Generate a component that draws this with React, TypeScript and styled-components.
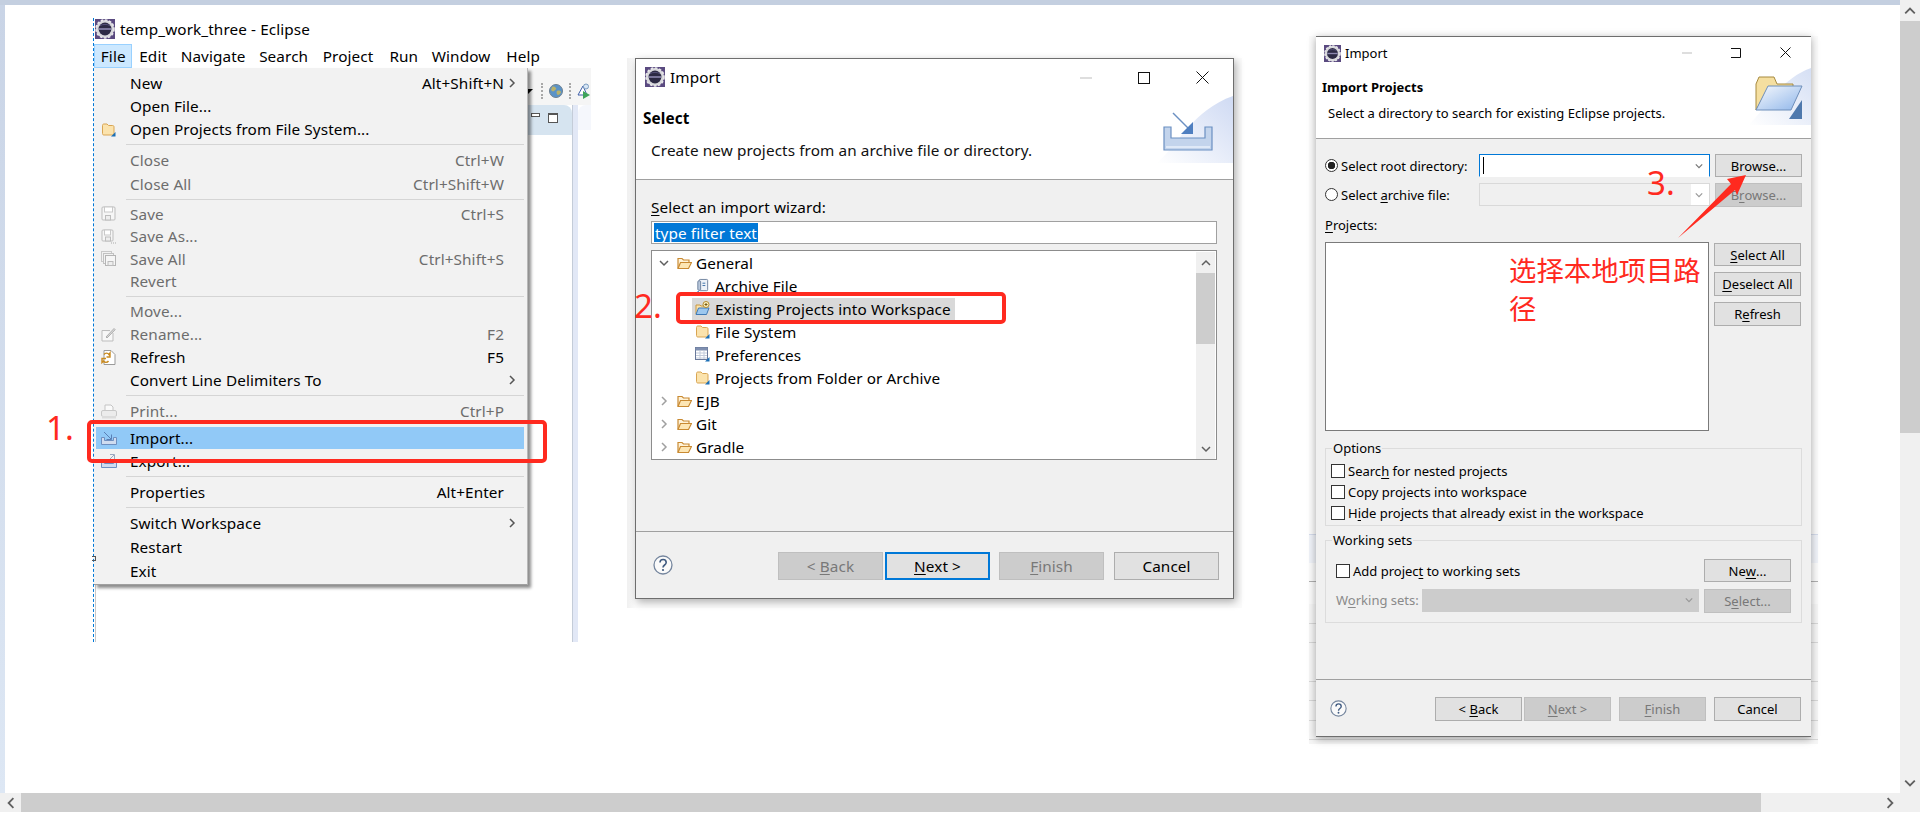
import React from "react";
import styled, { createGlobalStyle } from "styled-components";

const Global = createGlobalStyle`
  html, body { margin: 0; padding: 0; height: 100%; overflow: hidden; background: #fff; }
  #root { height: 100%; }
  * { box-sizing: border-box; }
`;

const FONT = `"Noto Sans", "Open Sans", "Noto Sans CJK SC", sans-serif`;
const RED = "#ff2a1f";

/* ---------- page frame ---------- */
const Page = styled.div`
  width: 1920px;
  height: 813px;
  display: grid;
  grid-template-columns: 1fr 20px;
  grid-template-rows: 793px 19px 1px;
  font-family: ${FONT};
  color: #000;
  overflow: hidden;
`;
const Stage = styled.div`
  display: grid;
  grid-template-rows: 5px 1fr;
  grid-template-columns: 5px 1fr;
  min-width: 0;
`;
const TopEdge = styled.div`
  grid-column: 1 / 3;
  background: #c4cfe0;
`;
const LeftEdge = styled.div`
  background: linear-gradient(#c9d4e6, #dde7f4);
`;
const Canvas = styled.div`
  position: relative;
  background: #fff;
`;
const VBar = styled.div`
  background: #f0f0f0;
  display: flex;
  flex-direction: column;
`;
const ScrollEnd = styled.div`
  flex: 1 1 auto;
`;
const ArrowCell = styled.div`
  flex: 0 0 21px;
  display: flex;
  align-items: center;
  justify-content: center;
`;
const VThumb = styled.div`
  flex: 0 0 412px;
  background: #cdcdcd;
`;
const HBar = styled.div`
  grid-column: 1 / 3;
  background: #f0f0f0;
  display: flex;
`;
const HThumb = styled.div`
  flex: 0 0 1740px;
  background: #cdcdcd;
`;
const BottomGap = styled.div`
  grid-column: 1 / 3;
  background: #fff;
`;

/* ---------- eclipse shot ---------- */
const EclipseShot = styled.div`
  position: absolute;
  left: 88px;
  top: 13px;
  width: 498px;
  height: 624px;
  border-left: 1px dashed #0078d7;
  display: flex;
  flex-direction: column;
  background: #fff;
`;
const Handle = styled.div`
  position: absolute;
  left: -2px;
  top: 538px;
  width: 4px;
  height: 5px;
  border: 1px solid #555;
  border-left: 0;
  z-index: 3;
`;
const TitleRow = styled.div`
  height: 26px;
  display: flex;
  align-items: center;
  gap: 5px;
  padding: 0 0 4px 1px;
  font-size: 15.3px;
  letter-spacing: 0.1px;
`;
const MenuBar = styled.div`
  height: 24px;
  display: flex;
  font-size: 15.3px;
  letter-spacing: 0.1px;
`;
const MenuItem = styled.div<{ $active?: boolean; $after: number }>`
  padding: 0 5.8px;
  margin-right: ${(p) => p.$after}px;
  display: flex;
  align-items: center;
  background: ${(p) => (p.$active ? "#cce8ff" : "transparent")};
  border: 1px solid ${(p) => (p.$active ? "#99d1ff" : "transparent")};
`;
const Workbench = styled.div`
  position: relative;
  flex: 1;
  display: flex;
  flex-direction: column;
  border-left: 1px solid #c8c8c8;
  margin-left: 1px;
`;
const ToolStrip = styled.div`
  height: 37px;
  background: #f5f5f5;
  display: flex;
  align-items: center;
  justify-content: flex-end;
  gap: 6px;
  padding: 9px 0 0 0;
`;
const Grip = styled.div`
  width: 1px;
  height: 16px;
  border-left: 2px dotted #a8a8a8;
`;
const Caret = styled.div`
  width: 0;
  height: 0;
  border-left: 5px solid transparent;
  border-right: 5px solid transparent;
  border-top: 5px solid #000;
  margin-right: 2px;
`;
const PanelRow = styled.div`
  flex: 1;
  display: flex;
`;
const LeftPanel = styled.div`
  flex: 0 0 477px;
  border-right: 1px solid #c4ccd8;
  background: #fff;
`;
const PanelHead = styled.div`
  height: 30px;
  background: #d6e4f0;
  border-top-right-radius: 8px;
  display: flex;
  justify-content: flex-end;
  align-items: flex-start;
  gap: 8px;
  padding: 8px 14px 0 0;
`;
const MinBtn = styled.div`
  width: 9px;
  height: 4px;
  border: 1px solid #555;
  background: #fff;
`;
const MaxBtn = styled.div`
  width: 10px;
  height: 10px;
  border: 1px solid #555;
  border-top-width: 2px;
  background: #fff;
`;
const Gutter = styled.div`
  flex: 0 0 5px;
  background: #e2e8f6;
`;
const RightPanel = styled.div`
  flex: 1;
  border-top-left-radius: 8px;
  background: linear-gradient(#f5f7fc 25px, #fff 25px);
`;

const Menu = styled.div`
  position: absolute;
  left: -2px;
  top: 0;
  width: 434px;
  height: 517px;
  background: #f2f2f2;
  padding-top: 3.5px;
  box-shadow: 3px 3px 3px rgba(0, 0, 0, 0.45);
  border-right: 1px solid #b8b8b8;
  border-bottom: 1px solid #a0a0a0;
  font-size: 15.3px;
  letter-spacing: 0.1px;
  z-index: 2;
`;
const MenuRow = styled.div<{ $h: number; $off?: boolean; $hot?: boolean }>`
  height: ${(p) => p.$h}px;
  display: grid;
  grid-template-columns: 34px 1fr auto 20px;
  align-items: center;
  color: ${(p) => (p.$off ? "#6d6d6d" : "#000")};
  background: ${(p) => (p.$hot ? "#91c9f7" : "transparent")};
  margin: 0 3px 0 2px;
`;
const MenuIcon = styled.div`
  display: flex;
  padding-left: 5px;
`;
const Shortcut = styled.div``;
const Sub = styled.div`
  display: flex;
  justify-content: flex-end;
  padding-right: 7px;
`;
const MenuSep = styled.div`
  height: 1px;
  background: #d5d5d5;
  margin: 3px 3px 3px 32px;
`;
const MenuGap = styled.div`
  height: 3px;
`;

/* ---------- dialogs ---------- */
const DialogShade = styled.div`
  position: absolute;
  left: 622px;
  top: 53px;
  width: 615px;
  height: 550px;
  background: linear-gradient(90deg, #f0f0f0 0, #fbfbfb 8px, #fbfbfb 100%);
`;
const Dialog = styled.div`
  position: absolute;
  left: 630px;
  top: 53px;
  width: 599px;
  height: 541px;
  display: flex;
  flex-direction: column;
  background: #f0f0f0;
  border: 1px solid #6e6e6e;
  box-shadow: 2px 3px 8px rgba(0, 0, 0, 0.3);
  font-size: 15.3px;
  letter-spacing: 0.1px;
`;
const DialogTop = styled.div`
  flex: 0 0 121px;
  position: relative;
  background: #fff;
  border-bottom: 1px solid #a0a0a0;
  padding: 8px 0 0 9px;
`;
const WinTitle = styled.div`
  display: flex;
  align-items: center;
  gap: 5px;
  height: 20px;
`;
const WinControls = styled.div`
  position: absolute;
  right: 24px;
  top: 12px;
  display: flex;
  align-items: center;
  gap: 46px;
`;
const Heading = styled.div`
  font-weight: 700;
  margin: 21px 0 0 -2px;
  line-height: 20px;
`;
const Desc = styled.div`
  margin: 12px 0 0 6px;
  line-height: 20px;
  color: #111;
`;
const Banner = styled.svg`
  position: absolute;
  right: 0;
  top: 37px;
`;
const DialogBody = styled.div`
  flex: 1;
  padding: 17px 16px 0 15px;
  display: flex;
  flex-direction: column;
`;
const Mn = styled.span`
  text-decoration: underline;
  text-underline-offset: 2px;
  text-decoration-thickness: 1px;
`;
const FieldLabel = styled.div`
  line-height: 20px;
  height: 24px;
`;
const FilterInput = styled.div`
  height: 23px;
  border: 1px solid #a0a0a0;
  background: #fff;
  padding: 1px 2px;
  display: flex;
`;
const Selected = styled.span`
  background: #0078d7;
  color: #fff;
  line-height: 20px;
  padding: 0 1px;
`;
const TreeBox = styled.div`
  margin-top: 6px;
  height: 210px;
  border: 1px solid #8c8c8c;
  background: #fff;
  display: flex;
  padding: 1px 1px 0 0;
`;
const TreeList = styled.div`
  flex: 1;
  margin-top: -1px;
  overflow: hidden;
`;
const TreeRow = styled.div<{ $depth?: number }>`
  height: 23px;
  display: flex;
  align-items: center;
  padding-left: ${(p) => (p.$depth ? 43 : 6)}px;
`;
const Twisty = styled.div`
  width: 12px;
  margin-right: 7px;
  display: flex;
  justify-content: center;
`;
const TreeIcon = styled.div<{ $tight?: boolean }>`
  width: 15px;
  height: 16px;
  margin-right: ${(p) => (p.$tight ? 4 : 5)}px;
  display: flex;
  align-items: center;
`;
const TreeLabel = styled.span<{ $hot?: boolean }>`
  background: ${(p) => (p.$hot ? "#d9d9d9" : "transparent")};
  line-height: 22px;
  padding-right: 4px;
`;
const HotBlock = styled.div`
  display: flex;
  align-items: center;
  background: #d9d9d9;
  margin-left: -3px;
  padding-left: 3px;
`;
const TreeScroll = styled.div`
  width: 19px;
  background: #f0f0f0;
  display: flex;
  flex-direction: column;
`;
const TreeThumb = styled.div`
  flex: 0 0 71px;
  background: #cdcdcd;
`;
const Footer = styled.div<{ $h: number; $pad: string }>`
  flex: 0 0 ${(p) => p.$h}px;
  border-top: 1px solid #a0a0a0;
  display: flex;
  align-items: flex-start;
  padding: ${(p) => p.$pad};
`;
const HelpWrap = styled.div<{ $top: number }>`
  margin-right: auto;
  margin-top: ${(p) => p.$top}px;
`;
const Btn = styled.div<{ $w: number; $h: number; $kind?: "off" | "focus" }>`
  width: ${(p) => p.$w}px;
  height: ${(p) => p.$h}px;
  display: flex;
  align-items: center;
  justify-content: center;
  flex: none;
  background: ${(p) => (p.$kind === "off" ? "#cccccc" : "#e1e1e1")};
  border: ${(p) =>
    p.$kind === "focus" ? "2px solid #0078d7" : p.$kind === "off" ? "1px solid #bfbfbf" : "1px solid #adadad"};
  color: ${(p) => (p.$kind === "off" ? "#787878" : "#000")};
`;
const BtnGap = styled.div<{ $w: number }>`
  flex: 0 0 ${(p) => p.$w}px;
`;

/* ---------- import projects dialog ---------- */
const SmallShade = styled.div`
  position: absolute;
  left: 1304px;
  top: 31px;
  width: 509px;
  height: 708px;
  background:
    linear-gradient(#d5dcec, #d5dcec) 0 498px / 100% 1px no-repeat,
    linear-gradient(#f0f3f9, #f0f3f9) 0 499px / 100% 28px no-repeat,
    linear-gradient(#b0b0b0, #b0b0b0) 0 545px / 100% 1px no-repeat,
    repeating-linear-gradient(#f6f6f6 0, #f6f6f6 18.5px, #d8d8d8 18.5px, #d8d8d8 19.5px) 0 568px / 100% 140px no-repeat,
    #fbfbfb;
`;
const Small = styled.div`
  position: absolute;
  left: 1311px;
  top: 31px;
  width: 495px;
  height: 701px;
  display: flex;
  flex-direction: column;
  background: #f0f0f0;
  border-top: 1px solid #6e6e6e;
  border-bottom: 1px solid #6e6e6e;
  box-shadow: 0 2px 8px rgba(0, 0, 0, 0.35);
  font-size: 13px;
`;
const SmallTop = styled.div`
  flex: 0 0 102px;
  position: relative;
  background: #fff;
  border-bottom: 1px solid #a0a0a0;
  padding: 7px 0 0 8px;
`;
const SmallTitle = styled.div`
  display: flex;
  align-items: center;
  gap: 4px;
  height: 18px;
`;
const SmallControls = styled.div`
  position: absolute;
  right: 20px;
  top: 10px;
  display: flex;
  align-items: center;
  gap: 39px;
`;
const SmallHeading = styled.div`
  font-weight: 700;
  margin: 16px 0 0 -2px;
  line-height: 18px;
`;
const SmallDesc = styled.div`
  margin: 8px 0 0 4px;
  line-height: 18px;
`;
const SmallBanner = styled.svg`
  position: absolute;
  right: 0;
  top: 31px;
`;
const Form = styled.div`
  flex: 1;
  padding: 15px 10px 0 9px;
  display: flex;
  flex-direction: column;
`;
const SourceGrid = styled.div`
  display: grid;
  grid-template-columns: 149px 231px 87px;
  column-gap: 5px;
  row-gap: 6px;
  grid-auto-rows: 23px;
  align-items: stretch;
`;
const RadioLine = styled.div`
  display: flex;
  align-items: center;
  gap: 3px;
  white-space: nowrap;
`;
const Radio = styled.div<{ $on?: boolean }>`
  width: 13px;
  height: 13px;
  flex: none;
  border-radius: 50%;
  border: 1px solid #333;
  background: ${(p) => (p.$on ? "radial-gradient(circle, #222 0 3.5px, #fff 4px)" : "#fff")};
`;
const Combo = styled.div<{ $off?: boolean; $focus?: boolean }>`
  display: flex;
  align-items: center;
  justify-content: space-between;
  background: #fff;
  padding: 0 6px 0 3px;
  border: 1px solid ${(p) => (p.$focus ? "#0078d7" : "#d9d9d9")};
  ${(p) => (p.$focus ? "border-bottom-color: transparent;" : "")}
  ${(p) => (p.$off ? "background: linear-gradient(90deg, #f0f0f0 0 92%, #fff 92%);" : "")}
`;
const Caretbar = styled.div`
  width: 1px;
  height: 17px;
  background: #000;
`;
const ProjectsLabel = styled.div`
  margin-top: 10px;
  height: 26px;
  line-height: 18px;
`;
const ProjectsRow = styled.div`
  display: grid;
  grid-template-columns: 384px 87px;
  column-gap: 5px;
  height: 189px;
`;
const ProjectsBox = styled.div`
  background: #fff;
  border: 1px solid #7a7a7a;
`;
const SideButtons = styled.div`
  display: flex;
  flex-direction: column;
  gap: 6px;
  padding-top: 1px;
`;
const Group = styled.div<{ $h: number; $top: number }>`
  position: relative;
  height: ${(p) => p.$h}px;
  margin-top: ${(p) => p.$top}px;
  width: 477px;
  border: 1px solid #dcdcdc;
`;
const Legend = styled.div`
  position: absolute;
  left: 6px;
  top: -10px;
  background: #f0f0f0;
  padding: 0 1px;
  line-height: 18px;
`;
const OptionList = styled.div`
  display: flex;
  flex-direction: column;
  padding: 11px 0 0 5px;
`;
const CheckLine = styled.div`
  height: 21px;
  display: flex;
  align-items: center;
  gap: 3px;
`;
const Check = styled.div`
  width: 14px;
  height: 14px;
  flex: none;
  background: #fff;
  border: 1px solid #333;
`;
const WorkingGrid = styled.div`
  display: grid;
  grid-template-columns: 81px 277px 87px;
  column-gap: 5px;
  row-gap: 6px;
  grid-auto-rows: 23.5px;
  padding: 18px 0 0 10px;
  align-items: stretch;
`;
const WideCheck = styled.div`
  grid-column: 1 / 3;
  display: flex;
  align-items: center;
  gap: 3px;
`;
const OffLabel = styled.div`
  display: flex;
  align-items: center;
  color: #8a8a8a;
  white-space: nowrap;
`;
const OffCombo = styled.div`
  background: #cccccc;
  display: flex;
  align-items: center;
  justify-content: flex-end;
  padding-right: 6px;
`;

/* ---------- annotations ---------- */
const Callout = styled.div`
  position: absolute;
  border: 4px solid ${RED};
  border-radius: 5px;
  z-index: 5;
`;
const ImportBox = styled(Callout)`
  left: 82px;
  top: 415px;
  width: 460px;
  height: 43px;
`;
const WizardBox = styled(Callout)`
  left: 671px;
  top: 287px;
  width: 330px;
  height: 32px;
`;
const Step = styled.div`
  position: absolute;
  color: ${RED};
  font-size: 33px;
  line-height: 36px;
  z-index: 5;
`;
const StepOne = styled(Step)`
  left: 41px;
  top: 405px;
`;
const StepTwo = styled(Step)`
  left: 629px;
  top: 283px;
`;
const StepThree = styled(Step)`
  left: 1642px;
  top: 160px;
`;
const Note = styled.div`
  position: absolute;
  left: 1504px;
  top: 246px;
  width: 200px;
  color: ${RED};
  font-family: "Noto Sans CJK SC", sans-serif;
  font-size: 27.4px;
  line-height: 37.5px;
  z-index: 5;
`;
const ArrowSvg = styled.svg`
  position: absolute;
  left: 1665px;
  top: 165px;
  z-index: 5;
`;

/* ---------- drawn icons ---------- */
const EclipseLogo = ({ s = 20 }: { s?: number }) => (
  <svg width={s} height={s} viewBox="0 0 20 20" style={{ flex: "none" }}>
    <rect width="20" height="20" fill="#5a4a80" />
    <circle cx="10" cy="10" r="9" fill="#d8d8dc" stroke="#e8e8ea" strokeWidth="1.6" strokeDasharray="2.6 1.6" />
    <circle cx="10" cy="10" r="6.4" fill="#2c2a44" />
    <path d="M3.8 10h12.4" stroke="#8c88b0" strokeWidth="1.6" />
    <path d="M5 6.6c3-1.6 7-1.6 10 0" fill="none" stroke="#55527a" strokeWidth="1" />
  </svg>
);
const Chevron = ({ dir, c = "#5f5f5f", s = 10 }: { dir: "r" | "d" | "u" | "l"; c?: string; s?: number }) => {
  const d = { r: "M3 1l4 4-4 4", l: "M7 1L3 5l4 4", d: "M1 3l4 4 4-4", u: "M1 7l4-4 4 4" }[dir];
  return (
    <svg width={s} height={s} viewBox="0 0 10 10">
      <path d={d} fill="none" stroke={c} strokeWidth="1.5" />
    </svg>
  );
};
const ClosedFolder = () => (
  <svg width="15" height="15" viewBox="0 0 15 15">
    <path d="M1.5 3.5c0-1 .5-1.500 1.500-1.500h3l1.500 1.500h4c1 0 1.500.5 1.500 1.500v7c0 .6-.4 1-1 1H3c-1 0-1.500-.5-1.500-1.500z" fill="#fbe3ad" stroke="#d9a552" />
    <path d="M14.500 10v4.500H10z" fill="#1b6fb5" />
  </svg>
);
const OpenFolder = () => (
  <svg width="15" height="14" viewBox="0 0 15 14">
    <path d="M1 12V2.500h4L6.500 4H12v2.500" fill="#fff3d8" stroke="#c98a32" strokeWidth="1.200" />
    <path d="M1 12.500l2.500-6H14.500l-3 6z" fill="#fde6b4" stroke="#c98a32" strokeWidth="1.200" />
  </svg>
);
const ProjectFolder = () => (
  <svg width="15" height="15" viewBox="0 0 15 15">
    <path d="M1 13V4h4l1 1h5v2" fill="#fbe3ad" stroke="#c9973f" />
    <path d="M1 13.500L3.500 7H14l-2.500 6.500z" fill="#9cc7ee" stroke="#3f79b5" />
    <circle cx="11" cy="3.500" r="3" fill="#fff6c8" stroke="#b58a2c" />
    <path d="M9.500 3.500h3M11 2v3" stroke="#7a5a10" />
  </svg>
);
const ArchiveIcon = () => (
  <svg width="16" height="16" viewBox="0 0 16 16">
    <rect x="4.500" y="1" width="9" height="12" rx="1" fill="#eef2f8" stroke="#6c7f9c" />
    <rect x="3" y="2.500" width="3" height="10" rx="1" fill="#b9c8dc" stroke="#6c7f9c" />
    <path d="M8 5h3M8 7.500h3" stroke="#3a6ea5" />
    <path d="M1 15l3-2v2z" fill="#1b6fb5" />
  </svg>
);
const PrefIcon = () => (
  <svg width="15" height="15" viewBox="0 0 15 15">
    <rect x=".5" y=".5" width="12" height="12" fill="#fff" stroke="#69789a" />
    <rect x=".5" y=".5" width="12" height="3" fill="#7f8fb0" />
    <path d="M1 6h11M1 8.500h11M1 11h11M5 4v8M9 4v8" stroke="#c2cbdb" />
    <path d="M14.500 10v4.500H10z" fill="#1b6fb5" />
  </svg>
);
const SaveIcon = ({ small }: { small?: boolean }) => (
  <svg width="15" height="15" viewBox="0 0 15 15">
    <rect x="1" y="1" width={small ? 11 : 13} height={small ? 11 : 13} rx="1" fill="#f6f6f6" stroke="#bdbdbd" />
    <rect x="3.500" y="1" width={small ? 6 : 8} height="5" fill="#fff" stroke="#c9c9c9" />
    <rect x="4.500" y={small ? 8 : 9.500} width="5" height={small ? 4 : 4.500} fill="#eee" stroke="#bdbdbd" />
    {small && <path d="M10 14h1M12 14h1M14 14h1" stroke="#aaa" />}
  </svg>
);
const SaveAllIcon = () => (
  <svg width="15" height="15" viewBox="0 0 15 15">
    <rect x=".5" y=".5" width="10" height="10" fill="#f2f2f2" stroke="#c9c9c9" />
    <rect x="2.500" y="2.500" width="10" height="10" fill="#f2f2f2" stroke="#c2c2c2" />
    <rect x="4.500" y="4.500" width="10" height="10" fill="#f6f6f6" stroke="#b5b5b5" />
    <rect x="7" y="10.500" width="5" height="4" fill="#eee" stroke="#bbb" />
  </svg>
);
const RenameIcon = () => (
  <svg width="15" height="15" viewBox="0 0 15 15">
    <path d="M1 3.500h8M1 3.500V14h11V6" fill="#f8f8f8" stroke="#bdbdbd" />
    <path d="M5 10l8-8.500 1.200 1.200L6 11z" fill="#d8d8d8" stroke="#b0b0b0" />
  </svg>
);
const RefreshIcon = () => (
  <svg width="15" height="15" viewBox="0 0 15 15">
    <path d="M3 .5h7l4 4v10H3z" fill="#fff" stroke="#9a9a9a" />
    <path d="M3 4.500a3 3 0 0 1 5 0L9 3v4H5.500M7.500 11a3 3 0 0 1-5 0L1 12.500V8.500h4" fill="none" stroke="#c98a1e" strokeWidth="1.400" />
  </svg>
);
const PrintIcon = () => (
  <svg width="16" height="15" viewBox="0 0 16 15">
    <path d="M4 6V1h6l2 2v3" fill="#fafafa" stroke="#c4c4c4" />
    <rect x=".5" y="6.500" width="15" height="6" rx="1.500" fill="#ececec" stroke="#c8c8c8" />
    <rect x="1" y="12" width="14" height="2.500" fill="#dcdcdc" />
  </svg>
);
const TrayIcon = ({ out }: { out?: boolean }) => (
  <svg width="16" height="15" viewBox="0 0 16 15">
    <path d="M.5 7.500h3v3h9v-3h3v7H.5z" fill="#cfdcf0" stroke="#6e8fc0" />
    {out ? <path d="M6 9l7-7M9 1.500h4.500V6" fill="none" stroke="#9aa8c0" /> : <path d="M3 2l7 7M10.500 4.500V9.500H5.500" fill="none" stroke="#5a7fb5" />}
  </svg>
);
const HelpIcon = ({ s }: { s: number }) => (
  <svg width={s} height={s} viewBox="0 0 20 20">
    <circle cx="10" cy="10" r="9" fill="#fafafa" stroke="#75869e" strokeWidth="1.300" />
    <path d="M7 7.500c0-4 6.200-4 6.200 0 0 2.500-3.200 2.500-3.200 5" fill="none" stroke="#3f5a80" strokeWidth="1.600" />
    <circle cx="10" cy="15" r="1.100" fill="#3f5a80" />
  </svg>
);
const MinGlyph = ({ w }: { w: number }) => (
  <svg width={w} height={2}><path d={`M0 1h${w}`} stroke="#bdbdbd" /></svg>
);
const MaxGlyph = ({ s, open }: { s: number; open?: boolean }) => (
  <svg width={s} height={s}>
    {open ? (
      <path d={`M0 .5H${s - 0.5}V${s - 0.5}H0`} fill="none" stroke="#111" />
    ) : (
      <rect x=".5" y=".5" width={s - 1} height={s - 1} fill="none" stroke="#111" />
    )}
  </svg>
);
const CloseGlyph = ({ s }: { s: number }) => (
  <svg width={s} height={s}><path d={`M.5 .5L${s - 0.5} ${s - 0.5}M${s - 0.5} .5L.5 ${s - 0.5}`} stroke="#111" /></svg>
);
const Globe = () => (
  <svg width="14" height="14" viewBox="0 0 14 14">
    <circle cx="7" cy="7" r="6.500" fill="#5b93c7" stroke="#6d7f90" />
    <path d="M3 3c2-1 3 0 4 1s-1 2-2 3-2 0-3-1zM8 7c2-1 4 0 4 1s-2 3-3 3-2-3-1-4z" fill="#b9b26a" />
  </svg>
);
const RunIcon = () => (
  <svg width="14" height="16" viewBox="0 0 14 16">
    <path d="M1 12L6 3l4 9z" fill="#fff" stroke="#3f5fa8" />
    <circle cx="9" cy="3.500" r="2.500" fill="#d8e6f5" stroke="#7a9cc0" />
    <path d="M6 8l7 4-7 4z" fill="#3fa35a" />
  </svg>
);

type MRow = { t: string; k?: string; off?: boolean; sub?: boolean; icon?: React.ReactNode };
const group = (rows: MRow[], h: number, hot?: string) =>
  rows.map((r) => (
    <MenuRow key={r.t} $h={h} $off={r.off} $hot={r.t === hot}>
      <MenuIcon>{r.icon}</MenuIcon>
      <div>{r.t}</div>
      <Shortcut>{r.k}</Shortcut>
      <Sub>{r.sub && <Chevron dir="r" c="#555" />}</Sub>
    </MenuRow>
  ));

const MENUS: [string, number][] = [
  ["File", 0],
  ["Edit", 0],
  ["Navigate", 0],
  ["Search", 1],
  ["Project", 2.4],
  ["Run", 0],
  ["Window", 2.4],
  ["Help", 0],
];

export default function App() {
  return (
    <>
      <Global />
      <Page>
        <Stage>
          <TopEdge />
          <LeftEdge />
          <Canvas>
            <EclipseShot>
              <Handle />
              <TitleRow>
                <EclipseLogo />
                <span>temp_work_three - Eclipse</span>
              </TitleRow>
              <MenuBar>
                {MENUS.map(([m, after], i) => (
                  <MenuItem key={m} $active={i === 0} $after={after}>{m}</MenuItem>
                ))}
              </MenuBar>
              <Workbench>
                <ToolStrip>
                  <Caret />
                  <Grip />
                  <Globe />
                  <Grip />
                  <RunIcon />
                </ToolStrip>
                <PanelRow>
                  <LeftPanel>
                    <PanelHead>
                      <MinBtn />
                      <MaxBtn />
                    </PanelHead>
                  </LeftPanel>
                  <Gutter />
                  <RightPanel />
                </PanelRow>
                <Menu>
                  {group(
                    [
                      { t: "New", k: "Alt+Shift+N", sub: true },
                      { t: "Open File..." },
                      { t: "Open Projects from File System...", icon: <ClosedFolder /> },
                    ],
                    23
                  )}
                  <MenuSep />
                  {group(
                    [
                      { t: "Close", k: "Ctrl+W", off: true },
                      { t: "Close All", k: "Ctrl+Shift+W", off: true },
                    ],
                    24
                  )}
                  <MenuSep />
                  {group(
                    [
                      { t: "Save", k: "Ctrl+S", off: true, icon: <SaveIcon /> },
                      { t: "Save As...", off: true, icon: <SaveIcon small /> },
                      { t: "Save All", k: "Ctrl+Shift+S", off: true, icon: <SaveAllIcon /> },
                      { t: "Revert", off: true },
                    ],
                    22.5
                  )}
                  <MenuSep />
                  {group(
                    [
                      { t: "Move...", off: true },
                      { t: "Rename...", k: "F2", off: true, icon: <RenameIcon /> },
                      { t: "Refresh", k: "F5", icon: <RefreshIcon /> },
                      { t: "Convert Line Delimiters To", sub: true },
                    ],
                    23
                  )}
                  <MenuSep />
                  {group([{ t: "Print...", k: "Ctrl+P", off: true, icon: <PrintIcon /> }], 25)}
                  <MenuGap />
                  {group([{ t: "Import...", icon: <TrayIcon /> }], 22, "Import...")}
                  {group([{ t: "Export...", icon: <TrayIcon out /> }], 24)}
                  <MenuSep />
                  {group([{ t: "Properties", k: "Alt+Enter" }], 24)}
                  <MenuSep />
                  {group([{ t: "Switch Workspace", sub: true }, { t: "Restart" }, { t: "Exit" }], 24)}
                </Menu>
              </Workbench>
            </EclipseShot>

            <DialogShade />
            <Dialog>
              <DialogTop>
                <WinTitle>
                  <EclipseLogo />
                  <span>Import</span>
                </WinTitle>
                <WinControls>
                  <MinGlyph w={12} />
                  <MaxGlyph s={12} />
                  <CloseGlyph s={13} />
                </WinControls>
                <Heading>Select</Heading>
                <Desc>Create new projects from an archive file or directory.</Desc>
                <Banner width="76" height="67" viewBox="0 0 76 67">
                  <defs>
                    <linearGradient id="sw1" x1="0" y1="1" x2="1" y2="0">
                      <stop offset="0" stopColor="#fff" />
                      <stop offset="1" stopColor="#cfdaf3" />
                    </linearGradient>
                  </defs>
                  <path d="M0 67C20 50 36 14 76 0V67z" fill="url(#sw1)" />
                  <path d="M7 31h7v11h34V31h7v23H7z" fill="#c3d4ec" stroke="#6b8fc2" strokeWidth="1.200" />
                  <path d="M9 51h44" stroke="#dfe9f7" strokeWidth="2" />
                  <path d="M16 17l17 17" stroke="#6b8fc2" strokeWidth="1.500" />
                  <path d="M36 26v12H24z" fill="#4f7fc0" />
                </Banner>
              </DialogTop>
              <DialogBody>
                <FieldLabel><Mn>S</Mn>elect an import wizard:</FieldLabel>
                <FilterInput><Selected>type filter text</Selected></FilterInput>
                <TreeBox>
                  <TreeList>
                    <TreeRow>
                      <Twisty><Chevron dir="d" /></Twisty>
                      <TreeIcon $tight><OpenFolder /></TreeIcon>
                      <span>General</span>
                    </TreeRow>
                    <TreeRow $depth={1}>
                      <TreeIcon><ArchiveIcon /></TreeIcon>
                      <span>Archive File</span>
                    </TreeRow>
                    <TreeRow $depth={1}>
                      <HotBlock>
                        <TreeIcon><ProjectFolder /></TreeIcon>
                        <TreeLabel $hot>Existing Projects into Workspace</TreeLabel>
                      </HotBlock>
                    </TreeRow>
                    <TreeRow $depth={1}>
                      <TreeIcon><ClosedFolder /></TreeIcon>
                      <span>File System</span>
                    </TreeRow>
                    <TreeRow $depth={1}>
                      <TreeIcon><PrefIcon /></TreeIcon>
                      <span>Preferences</span>
                    </TreeRow>
                    <TreeRow $depth={1}>
                      <TreeIcon><ClosedFolder /></TreeIcon>
                      <span>Projects from Folder or Archive</span>
                    </TreeRow>
                    {["EJB", "Git", "Gradle"].map((t) => (
                      <TreeRow key={t}>
                        <Twisty><Chevron dir="r" c="#a0a0a0" /></Twisty>
                        <TreeIcon $tight><OpenFolder /></TreeIcon>
                        <span>{t}</span>
                      </TreeRow>
                    ))}
                  </TreeList>
                  <TreeScroll>
                    <ArrowCell><Chevron dir="u" /></ArrowCell>
                    <TreeThumb />
                    <ScrollEnd />
                    <ArrowCell><Chevron dir="d" /></ArrowCell>
                  </TreeScroll>
                </TreeBox>
              </DialogBody>
              <Footer $h={67} $pad="20px 14px 0 17px">
                <HelpWrap $top={3}><HelpIcon s={20} /></HelpWrap>
                <Btn $w={105} $h={28} $kind="off">&lt;&nbsp;<Mn>B</Mn>ack</Btn>
                <BtnGap $w={2} />
                <Btn $w={105} $h={28} $kind="focus"><Mn>N</Mn>ext &gt;</Btn>
                <BtnGap $w={9} />
                <Btn $w={105} $h={28} $kind="off"><Mn>F</Mn>inish</Btn>
                <BtnGap $w={10} />
                <Btn $w={105} $h={28}>Cancel</Btn>
              </Footer>
            </Dialog>

            <SmallShade />
            <Small>
              <SmallTop>
                <SmallTitle>
                  <EclipseLogo s={17} />
                  <span>Import</span>
                </SmallTitle>
                <SmallControls>
                  <MinGlyph w={10} />
                  <MaxGlyph s={10} open />
                  <CloseGlyph s={11} />
                </SmallControls>
                <SmallHeading>Import Projects</SmallHeading>
                <SmallDesc>Select a directory to search for existing Eclipse projects.</SmallDesc>
                <SmallBanner width="63" height="57" viewBox="0 0 63 57">
                  <defs>
                    <linearGradient id="sw2" x1="0" y1="1" x2="1" y2="0">
                      <stop offset="0" stopColor="#fff" />
                      <stop offset="1" stopColor="#d5dff4" />
                    </linearGradient>
                    <linearGradient id="fl" x1="0" y1="0" x2="1" y2="1">
                      <stop offset="0" stopColor="#f7f9fd" />
                      <stop offset="1" stopColor="#8fb6ea" />
                    </linearGradient>
                  </defs>
                  <path d="M0 57C18 42 30 12 63 0V57z" fill="url(#sw2)" />
                  <path d="M8 42V16l3-7h15l3 7h16v8H18L8 42z" fill="#f5dfa0" stroke="#a78a3f" />
                  <path d="M8 42l12-24h34L43 42z" fill="url(#fl)" stroke="#6f8fba" />
                  <path d="M54 32v19H41z" fill="#4f79ad" />
                </SmallBanner>
              </SmallTop>
              <Form>
                <SourceGrid>
                  <RadioLine><Radio $on /><span>Select root directory:</span></RadioLine>
                  <Combo $focus><Caretbar /><Chevron dir="d" c="#777" s={8} /></Combo>
                  <Btn $w={87} $h={23}>Browse...</Btn>
                  <RadioLine><Radio /><span>Select <Mn>a</Mn>rchive file:</span></RadioLine>
                  <Combo $off><span /><Chevron dir="d" c="#999" s={8} /></Combo>
                  <Btn $w={87} $h={24} $kind="off">B<Mn>r</Mn>owse...</Btn>
                </SourceGrid>
                <ProjectsLabel><Mn>P</Mn>rojects:</ProjectsLabel>
                <ProjectsRow>
                  <ProjectsBox />
                  <SideButtons>
                    <Btn $w={87} $h={23}><Mn>S</Mn>elect All</Btn>
                    <Btn $w={87} $h={24}><Mn>D</Mn>eselect All</Btn>
                    <Btn $w={87} $h={24}>R<Mn>e</Mn>fresh</Btn>
                  </SideButtons>
                </ProjectsRow>
                <Group $h={78} $top={17}>
                  <Legend>Options</Legend>
                  <OptionList>
                    <CheckLine><Check /><span>Searc<Mn>h</Mn> for nested projects</span></CheckLine>
                    <CheckLine><Check /><span>Copy projects into workspace</span></CheckLine>
                    <CheckLine><Check /><span>H<Mn>i</Mn>de projects that already exist in the workspace</span></CheckLine>
                  </OptionList>
                </Group>
                <Group $h={83} $top={14}>
                  <Legend>Working sets</Legend>
                  <WorkingGrid>
                    <WideCheck><Check /><span>Add projec<Mn>t</Mn> to working sets</span></WideCheck>
                    <Btn $w={87} $h={23}>Ne<Mn>w</Mn>...</Btn>
                    <OffLabel><span>W<Mn>o</Mn>rking sets:</span></OffLabel>
                    <OffCombo><Chevron dir="d" c="#999" s={8} /></OffCombo>
                    <Btn $w={87} $h={24} $kind="off">S<Mn>e</Mn>lect...</Btn>
                  </WorkingGrid>
                </Group>
                <ScrollEnd />
              </Form>
              <Footer $h={57} $pad="17px 10px 0 14px">
                <HelpWrap $top={3}><HelpIcon s={17} /></HelpWrap>
                <Btn $w={87} $h={24}>&lt;&nbsp;<Mn>B</Mn>ack</Btn>
                <BtnGap $w={2} />
                <Btn $w={87} $h={24} $kind="off"><Mn>N</Mn>ext &gt;</Btn>
                <BtnGap $w={8} />
                <Btn $w={87} $h={24} $kind="off"><Mn>F</Mn>inish</Btn>
                <BtnGap $w={8} />
                <Btn $w={87} $h={24}>Cancel</Btn>
              </Footer>
            </Small>

            <ImportBox />
            <WizardBox />
            <StepOne>1.</StepOne>
            <StepTwo>2.</StepTwo>
            <StepThree>3.</StepThree>
            <Note>选择本地项目路径</Note>
            <ArrowSvg width="85" height="80" viewBox="1670 170 85 80">
              <path d="M1746 175L1727 179L1731 184L1678 238L1735 190L1737 195Z" fill={RED} />
            </ArrowSvg>
          </Canvas>
        </Stage>
        <VBar>
          <ArrowCell><Chevron dir="u" c="#606060" s={12} /></ArrowCell>
          <VThumb />
          <ScrollEnd />
          <ArrowCell><Chevron dir="d" c="#606060" s={12} /></ArrowCell>
        </VBar>
        <HBar>
          <ArrowCell><Chevron dir="l" c="#606060" s={12} /></ArrowCell>
          <HThumb />
          <ScrollEnd />
          <ArrowCell><Chevron dir="r" c="#606060" s={12} /></ArrowCell>
          <BtnGap $w={20} />
        </HBar>
        <BottomGap />
      </Page>
    </>
  );
}
